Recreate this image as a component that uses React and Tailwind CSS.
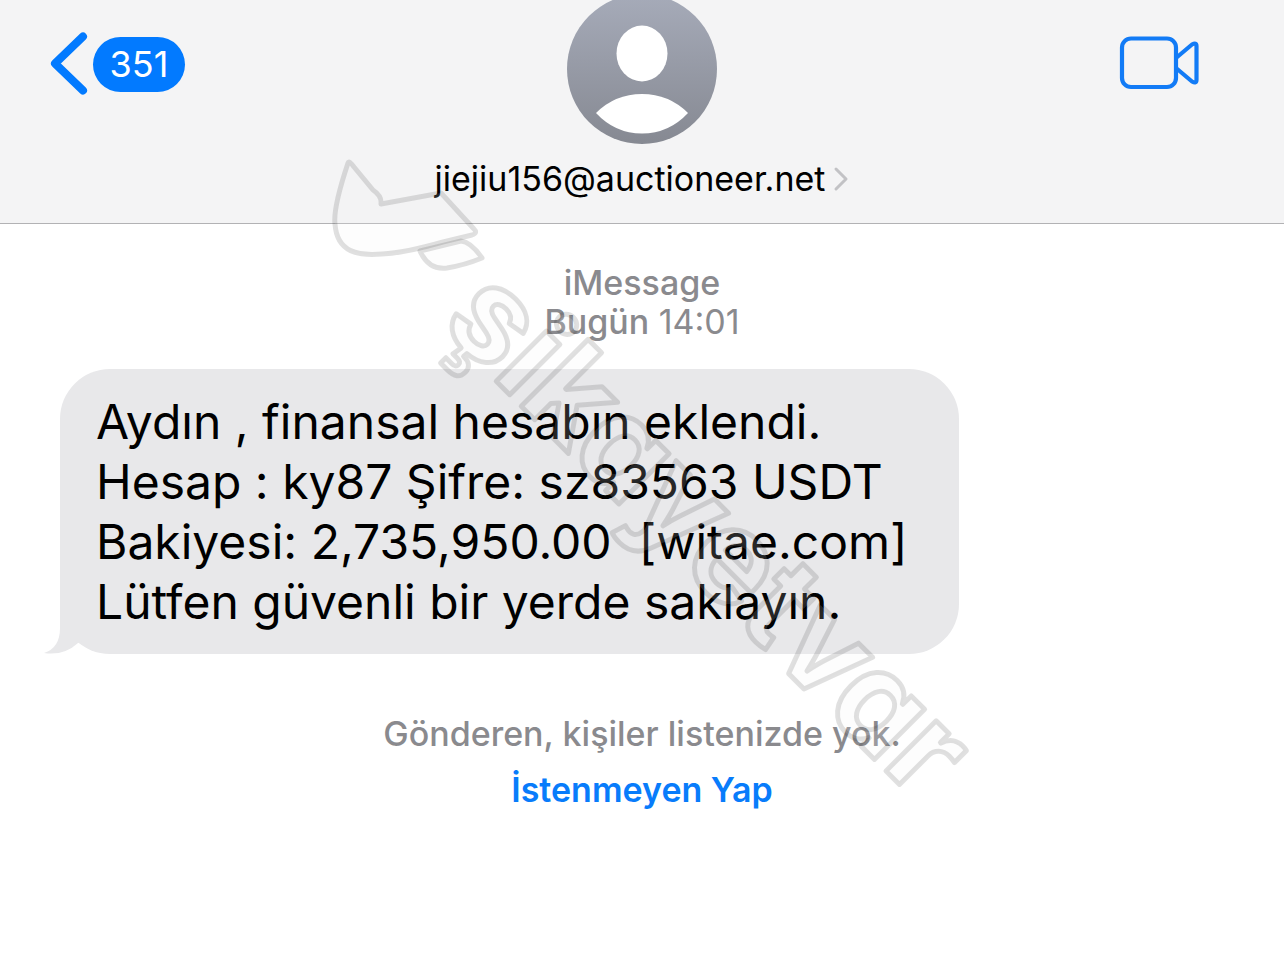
const contact = {
  address: 'jiejiu156@auctioneer.net',
  unread: 351,
};

const messageLines = [
  'Aydın , finansal hesabın eklendi.',
  'Hesap : ky87 Şifre: sz83563 USDT',
  'Bakiyesi: 2,735,950.00\u00a0 [witae.com]',
  'Lütfen güvenli bir yerde saklayın.',
];

function Avatar() {
  return (
    <svg viewBox="0 0 150 150" className="h-[150px] w-[150px]" aria-hidden="true">
      <defs>
        <linearGradient id="avatarFill" x1="0" y1="0" x2="0" y2="1">
          <stop offset="0" stopColor="#a6abb9" />
          <stop offset="1" stopColor="#868992" />
        </linearGradient>
      </defs>
      <circle cx="75" cy="75" r="75" fill="url(#avatarFill)" />
      <ellipse cx="75" cy="59.500" rx="25.500" ry="28" fill="#fff" />
      <path d="M29 119Q48 100 75 100Q102 100 121 119Q102 139.500 75 139.500Q48 139.500 29 119Z" fill="#fff" />
    </svg>
  );
}

function Header() {
  return (
    <header className="grid h-56 grid-cols-[1fr_auto_1fr] items-start border-b border-[#b2b2b4] bg-[#f4f4f5]">
      <div className="flex pt-8 pl-12">
        <button type="button" aria-label="Geri" className="flex items-center gap-1 text-[#027aff]">
          <svg viewBox="0 0 41 64" className="h-16 w-[41px]" fill="none" aria-hidden="true">
            <path d="M35 4.500L7 31.500L35 58.500" stroke="currentColor" strokeWidth="8" strokeLinecap="round" strokeLinejoin="round" />
          </svg>
          <span className="flex h-[55px] w-[92px] items-center justify-center rounded-full bg-[#027aff] text-4xl text-white">
            {contact.unread}
          </span>
        </button>
      </div>

      <button type="button" className="-mt-1.5 flex flex-col items-center gap-3">
        <Avatar />
        <span className="flex items-center gap-2 text-[34px] leading-[46px] text-black">
          {contact.address}
          <svg viewBox="0 0 16 26" className="h-[26px] w-4" fill="none" aria-hidden="true">
            <path d="M3 3L13 13L3 23" stroke="#c2c2c5" strokeWidth="3" strokeLinecap="round" strokeLinejoin="round" />
          </svg>
        </span>
      </button>

      <div className="flex justify-end pt-8 pr-20">
        <button type="button" aria-label="FaceTime" className="text-[#127bf6]">
          <svg viewBox="0 0 88 62" className="h-[62px] w-[88px]" fill="none" stroke="currentColor" strokeWidth="4.200" strokeLinejoin="round" aria-hidden="true">
            <rect x="6" y="6.500" width="54" height="48.500" rx="9" />
            <path d="M60 26L76 12.500Q80.500 10 80.500 14V48Q80.500 52 76 49.500L60 36" />
          </svg>
        </button>
      </div>
    </header>
  );
}

function Bubble() {
  return (
    <div className="relative mx-[60px] mt-7 w-[70%] rounded-[50px] bg-[#e8e8ea] px-9 pt-[23px] pb-[22px]">
      <svg viewBox="0 0 60 60" className="absolute bottom-0 -left-4 h-[60px] w-[60px]" aria-hidden="true">
        <path d="M16 0V34Q16 54 0 59Q20 62 34 49L60 40V0Z" fill="#e8e8ea" />
      </svg>
      <p className="relative text-5xl leading-[60px] whitespace-nowrap text-black">
        {messageLines.map((line) => (
          <span key={line} className="block">{line}</span>
        ))}
      </p>
    </div>
  );
}

// Site watermark laid diagonally over the conversation
function Watermark() {
  return (
    <svg
      viewBox="0 0 760 760"
      className="pointer-events-none absolute top-[150px] left-[325px] h-[760px] w-[760px]"
      fill="#f0f0f0"
      fillOpacity="0.16"
      stroke="#000"
      strokeOpacity="0.12"
      strokeWidth="5"
      strokeLinejoin="round"
      aria-hidden="true"
    >
      <path d="M23 13Q8 58 10 74C12 103 34 106 57 104C78 103 97 98 118 92L147 85Q153 83 149 79L116 43L56 54Q57 46 48 40L29 17Q24 10 23 13Z" />
      <path d="M95 101L136 91Q146 92 157 108Q140 115 122 118C106 120 99 110 95 101Z" />
      <text
        transform="translate(114 174) rotate(45)"
        fontFamily="Inter, sans-serif"
        fontSize="130"
        fontWeight="700"
        style={{ fontFeatureSettings: '"cv11"' }}
      >
        şikayetvar
      </text>
    </svg>
  );
}

export default function App() {
  return (
    <div className="relative min-h-screen overflow-hidden bg-white font-['Inter',sans-serif]">
      <Header />

      <main>
        <div className="mt-[39px] text-center text-[34px] leading-[39px] text-[#8a8a8e]">
          <p className="font-medium">iMessage</p>
          <p>
            <span className="font-medium">Bugün</span> 14:01
          </p>
        </div>

        <Bubble />

        <div className="mt-[52px] flex flex-col items-center text-[34px] leading-[56px]">
          <p className="font-medium text-[#8a8a8e]">Gönderen, kişiler listenizde yok.</p>
          <button type="button" className="font-semibold text-[#087cfb]">İstenmeyen Yap</button>
        </div>
      </main>

      <Watermark />
    </div>
  );
}
